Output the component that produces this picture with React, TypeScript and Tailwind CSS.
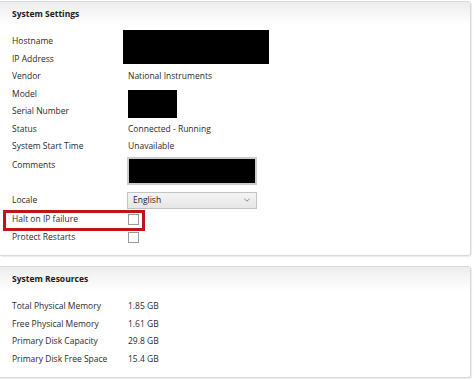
import React from "react";

const settings = [
  { label: "Hostname" },
  { label: "IP Address" },
  { label: "Vendor", value: "National Instruments" },
  { label: "Model" },
  { label: "Serial Number" },
  { label: "Status", value: "Connected - Running" },
  { label: "System Start Time", value: "Unavailable" },
];

const resources = [
  { label: "Total Physical Memory", value: "1.85 GB" },
  { label: "Free Physical Memory", value: "1.61 GB" },
  { label: "Primary Disk Capacity", value: "29.8 GB" },
  { label: "Primary Disk Free Space", value: "15.4 GB" },
];

const Checkbox = () => (
  <div className="w-[11px] h-[11px] border border-[#9a9a9a] bg-white" />
);

const PanelHeader = ({ title }: { title: string }) => (
  <div className="h-[24px] flex items-center pl-[12px] bg-gradient-to-b from-[#ededed] to-white font-bold text-[#1a1a1a] text-[8.5px]">
    {title}
  </div>
);

export default function App() {
  return (
    <div
      className="w-[474px] h-[380px] bg-white overflow-hidden pt-px text-[8.5px] text-[#2a2a2a]"
      style={{ fontFamily: '"Open Sans", "Noto Sans", sans-serif' }}
    >
      {/* System Settings */}
      <section className="w-[471px] h-[255px] border border-l-0 border-[#d9d9d9] rounded-r-[3px] shadow-[1px_1px_1px_rgba(0,0,0,0.08)]">
        <PanelHeader title="System Settings" />
        <div className="grid grid-cols-[116px_1fr] auto-rows-[17.5px] pl-[12px] pt-[7px] items-center">
          {settings.map((s, i) => (
            <React.Fragment key={s.label}>
              <div>{s.label}</div>
              {i === 0 ? (
                <div className="row-span-2 self-start">
                  <div className="-ml-[5px] -mt-[3px] w-[146px] h-[34px] bg-black" />
                </div>
              ) : i === 3 ? (
                <div className="row-span-2 self-start">
                  <div className="mt-[4px] w-[49px] h-[28px] bg-black" />
                </div>
              ) : s.value ? (
                <div>{s.value}</div>
              ) : null}
            </React.Fragment>
          ))}
        </div>

        <div className="grid grid-cols-[116px_1fr] pl-[12px]">
          <div className="leading-[17px]">Comments</div>
          <div className="pt-[1px] -ml-[1px]">
            <div className="w-[130px] h-[28px] border-2 border-[#cbcbcb] bg-black" />
          </div>
        </div>

        <div className="grid grid-cols-[116px_1fr] pl-[12px] mt-[7px] items-center h-[17px]">
          <div>Locale</div>
          <div className="-ml-[1px] w-[130px] h-[17px] border border-[#c3c3c3] bg-gradient-to-b from-[#f4f4f4] to-[#e6e6e6] flex items-center justify-between pl-[5px] pr-[6px] text-[#222]">
            <span>English</span>
            <svg width="6" height="4" viewBox="0 0 6 4" fill="none">
              <path d="M0.5 0.8L3 3.2L5.5 0.8" stroke="#777" strokeWidth="0.9" />
            </svg>
          </div>
        </div>

        <div className="relative grid grid-cols-[116px_1fr] pl-[12px] items-center h-[18px] mt-[2px]">
          <div>Halt on IP failure</div>
          <Checkbox />
          <div className="pointer-events-none absolute left-[3px] top-[-1px] w-[142px] h-[21px] border-[3px] border-[#c0141c]" />
        </div>

        <div className="grid grid-cols-[116px_1fr] pl-[12px] items-center h-[18px]">
          <div>Protect Restarts</div>
          <Checkbox />
        </div>
      </section>

      {/* System Resources */}
      <section className="mt-[10px] w-[471px] h-[112px] border border-l-0 border-[#d9d9d9] rounded-r-[3px] shadow-[1px_1px_1px_rgba(0,0,0,0.08)]">
        <PanelHeader title="System Resources" />
        <div className="grid grid-cols-[116px_1fr] auto-rows-[17.5px] pl-[12px] pt-[7px] items-center">
          {resources.map((r) => (
            <React.Fragment key={r.label}>
              <div>{r.label}</div>
              <div>{r.value}</div>
            </React.Fragment>
          ))}
        </div>
      </section>
    </div>
  );
}
